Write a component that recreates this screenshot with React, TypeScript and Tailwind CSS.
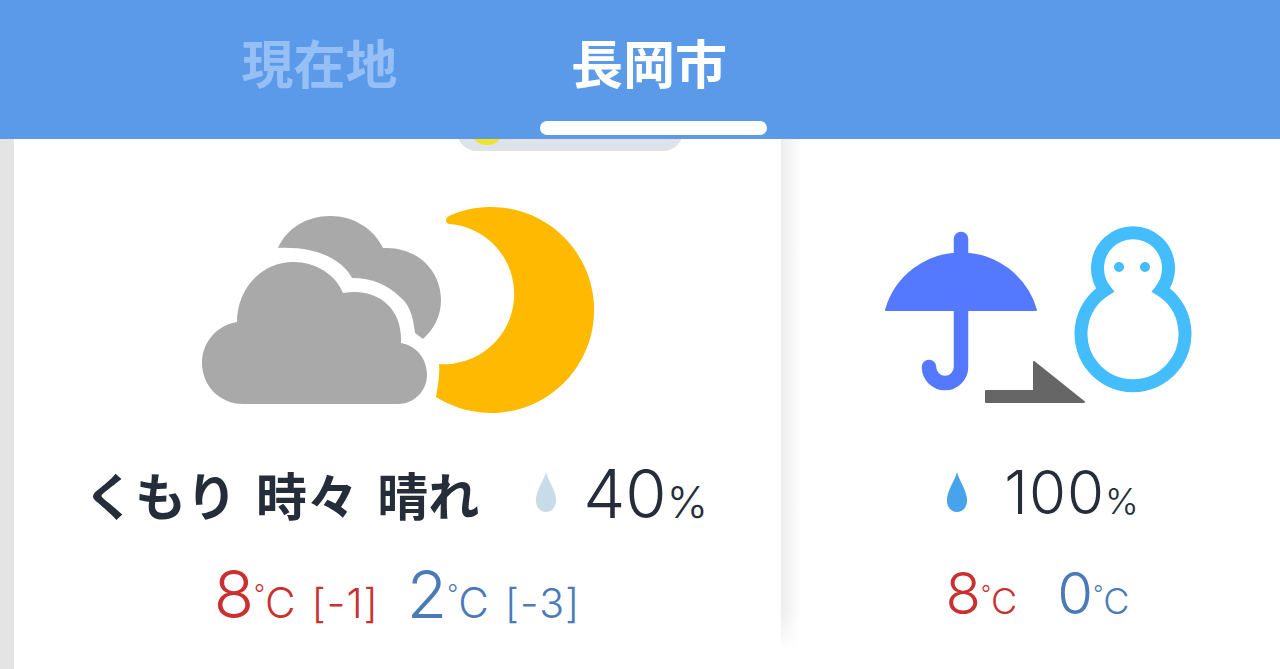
const font = "font-['Inter','Liberation_Sans',sans-serif]";
const cjk = "font-['Noto_Sans_CJK_JP',sans-serif]";

function CloudMoon() {
  return (
    <svg width="396" height="208" viewBox="200 205 396 208" className="block overflow-visible">
      <path d="M449 216 A103 103 0 1 1 436 397 C438 385 440 374 439 364 A69.75 69.75 0 1 0 449 224 C445 223 445 218 449 216 Z" fill="#ffba00" />
      <path d="M278 248 C287 228 307 216 330 216 C354 216 374 229 383 248 C416 246 441 270 441 300 C441 316 434 329 423 339 L415 333 C413 315 409 304 400 297 C388 285 372 278 352 278 C344 262 320 246 278 248 Z" fill="#a9a9a9" />
      <path d="M243 404 C220 404 202 386 202 363 C202 341 218 325 237 322 C237 288 262 262 293 262 C316 262 336 275 343 293 C375 287 403 306 401 343 C417 346 427 359 427 375 C427 391 414 404 398 404 Z" fill="#a9a9a9" />
    </svg>
  );
}

function UmbrellaSnow() {
  return (
    <svg width="316" height="208" viewBox="880 205 316 208" className="block overflow-visible">
      <path d="M885 310 A78 78 0 0 1 1035 310 Z" fill="#5479ff" stroke="#5479ff" strokeWidth="2" strokeLinejoin="round" />
      <path d="M960 239 V255 M960 300 V367 A16 16 0 0 1 928 367" fill="none" stroke="#5479ff" strokeWidth="14.5" strokeLinecap="round" />
      <path d="M985 391 H1033 V362 L1083 402 H985 Z" fill="#666666" stroke="#666666" strokeWidth="2" strokeLinejoin="round" />
      <path d="M1104 290 A35.5 35.5 0 1 1 1160 290 A52 52 0 1 1 1104 290 Z" fill="none" stroke="#44bdfd" strokeWidth="13" />
      <circle cx="1118" cy="267" r="5" fill="#44bdfd" />
      <circle cx="1144" cy="267" r="5" fill="#44bdfd" />
    </svg>
  );
}

function Drop({ color }: { color: string }) {
  return (
    <svg width="22" height="42" viewBox="0 0 24 44" preserveAspectRatio="none" className="block mb-[4px]">
      <path d="M12 1 C14 10 23 20 23 31 C23 38 18 43 12 43 C6 43 1 38 1 31 C1 20 10 10 12 1 Z" fill={color} />
    </svg>
  );
}

function TempLarge({ value, color, extra }: { value: string; color: string; extra: string }) {
  return (
    <div className={`${font} flex items-baseline font-light`} style={{ color }}>
      <span className="text-[66px] leading-none">{value}</span>
      <span className="text-[24px] leading-none -translate-y-[16px]">°</span>
      <span className="text-[42px] leading-none">C</span>
      <span className="text-[41px] leading-none ml-[16px] tracking-[1px]">{extra}</span>
    </div>
  );
}

function TempSmall({ value, color }: { value: string; color: string }) {
  return (
    <div className={`${font} flex items-baseline font-light`} style={{ color }}>
      <span className="text-[58px] leading-none">{value}</span>
      <span className="text-[22px] leading-none -translate-y-[13px]">°</span>
      <span className="text-[36px] leading-none">C</span>
    </div>
  );
}

export default function App() {
  return (
    <div className="w-[1280px] h-[669px] overflow-hidden flex flex-col bg-white">
      <header className="h-[139px] shrink-0 bg-[#5a9ae8] flex relative z-10">
        <div className={`${cjk} w-[227px] ml-[206px] font-bold text-[52px] leading-none pt-[36px] text-center text-[#95bff5]`}>現在地</div>
        <div className="w-[227px] ml-[107px] flex flex-col">
          <div className={`${cjk} font-bold text-[52px] leading-none pt-[36px] pr-[9px] text-center text-white`}>長岡市</div>
          <div className="mt-auto mb-[4px] h-[14px] rounded-[7px] bg-white"></div>
        </div>
      </header>
      <main className="flex-1 flex min-h-0 bg-[#e4e4e4]">
        <section className="relative ml-[14px] w-[767px] bg-white flex flex-col items-center pt-[66px]">
          <div className="absolute left-[443px] top-[-28px] w-[226px] h-[40px] rounded-[20px] bg-[#dee3e7] overflow-hidden">
            <div className="absolute left-[12px] top-[-2px] w-[36px] h-[36px] rounded-full bg-[#f2e22c]"></div>
          </div>
          <CloudMoon />
          <div className="mt-[55px] flex items-center h-[52px] ml-[-3px]">
            <div className={`${cjk} font-bold text-[51px] leading-none text-[#252c3a] flex gap-[19px]`}>
              <span>くもり</span>
              <span>時々</span>
              <span>晴れ</span>
            </div>
            <div className="ml-[56px]"><Drop color="#c8dbe9" /></div>
            <div className={`${font} ml-[26px] mb-[1px] flex items-baseline font-light text-[#252c3a]`}>
              <span className="text-[67px] leading-none">40</span>
              <span className="text-[44px] leading-none">%</span>
            </div>
          </div>
          <div className="mt-[41px] flex items-baseline gap-[28px] ml-[-1px]">
            <TempLarge value="8" color="#c9302f" extra="[-1]" />
            <TempLarge value="2" color="#4a7ab8" extra="[-3]" />
          </div>
        </section>
        <section className="relative flex-1 bg-white flex flex-col items-center pt-[66px] pl-[16px]">
          <div className="absolute left-0 top-0 w-[20px] h-[512px] bg-gradient-to-r from-[#ececec] to-white">
            <div className="absolute left-0 bottom-0 w-full h-[40px] bg-gradient-to-b from-transparent to-white"></div>
          </div>
          <UmbrellaSnow />
          <div className="mt-[55px] flex items-center h-[52px] ml-[8px]">
            <Drop color="#47a3ea" />
            <div className={`${font} ml-[36px] mb-[4px] flex items-baseline font-light text-[#252c3a]`}>
              <span className="text-[60px] leading-none tracking-[1px]">100</span>
              <span className="text-[36px] leading-none">%</span>
            </div>
          </div>
          <div className="mt-[44px] flex items-baseline gap-[40px] ml-[-2px]">
            <TempSmall value="8" color="#c9302f" />
            <TempSmall value="0" color="#4a7ab8" />
          </div>
        </section>
      </main>
    </div>
  );
}
